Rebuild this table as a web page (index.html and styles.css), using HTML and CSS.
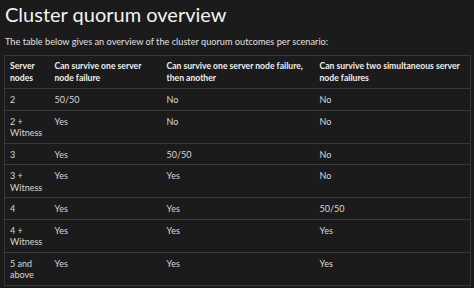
FILE: index.html
```html
<!DOCTYPE html>
<html lang="en">
<head>
  <meta charset="UTF-8">
  <title>Cluster quorum overview</title>
  <link rel="stylesheet" href="styles.css">
</head>
<body>
  <h1 class="page-title">Cluster quorum overview</h1>
  <p class="intro">The table below gives an overview of the cluster quorum outcomes per scenario:</p>
  <table class="quorum-table">
    <colgroup>
      <col class="col-nodes">
      <col class="col-one">
      <col class="col-two">
      <col class="col-sim">
    </colgroup>
    <thead>
      <tr>
        <th>Server nodes</th>
        <th>Can survive one server node failure</th>
        <th>Can survive one server node failure, then another</th>
        <th>Can survive two simultaneous server node failures</th>
      </tr>
    </thead>
    <tbody>
      <tr><td>2</td><td>50/50</td><td>No</td><td>No</td></tr>
      <tr><td>2 + Witness</td><td>Yes</td><td>No</td><td>No</td></tr>
      <tr><td>3</td><td>Yes</td><td>50/50</td><td>No</td></tr>
      <tr><td>3 + Witness</td><td>Yes</td><td>Yes</td><td>No</td></tr>
      <tr><td>4</td><td>Yes</td><td>Yes</td><td>50/50</td></tr>
      <tr><td>4 + Witness</td><td>Yes</td><td>Yes</td><td>Yes</td></tr>
      <tr><td>5 and above</td><td>Yes</td><td>Yes</td><td>Yes</td></tr>
    </tbody>
  </table>
</body>
</html>
```

FILE: styles.css
```css
* {
  margin: 0;
  padding: 0;
  box-sizing: border-box;
}

body {
  background: #1b1b1b;
  color: #e6e6e6;
  font-family: Lato, 'Noto Sans', sans-serif;
  padding: 0 5px 0 4px;
}

.page-title {
  font-size: 20px;
  font-weight: 400;
  line-height: 29px;
  padding: 0 0 0 1px;
  color: #f2f2f2;
}

.intro {
  font-size: 9.2px;
  line-height: 13px;
  margin: 6px 0 7px 1px;
  color: #e0e0e0;
}

/* Data table */
.quorum-table {
  width: 466px;
  border-collapse: collapse;
  table-layout: fixed;
  border: 1px solid #383838;
  font-size: 9px;
  line-height: 11.5px;
}

.col-nodes { width: 45px; }
.col-one { width: 112px; }
.col-two { width: 153px; }
.col-sim { width: 156px; }

.quorum-table th,
.quorum-table td {
  text-align: left;
  vertical-align: top;
  padding: 5px 5px 4px 5px;
  border-top: 1px solid #383838;
}

.quorum-table th {
  font-size: 8.6px;
  font-weight: 700;
  color: #f0f0f0;
}

.quorum-table td {
  color: #d8d8d8;
}
```
